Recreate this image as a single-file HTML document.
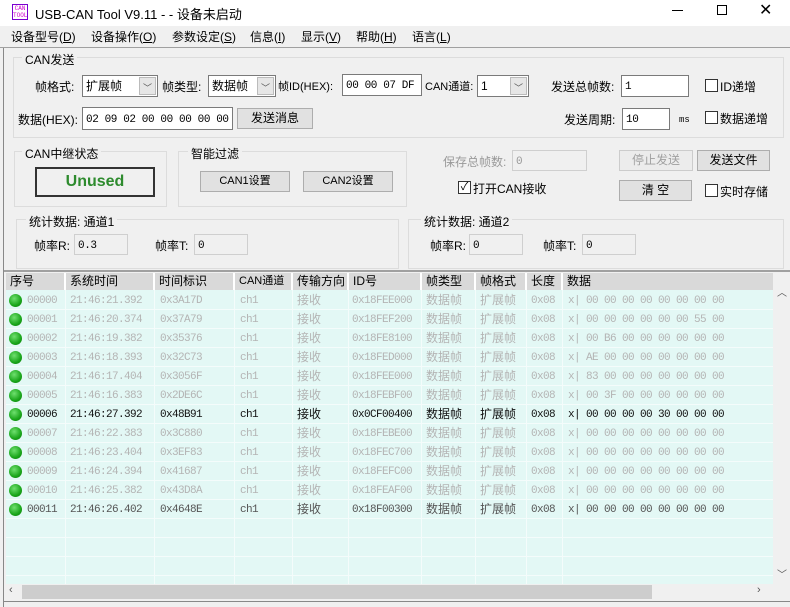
<!DOCTYPE html><html><head><meta charset="utf-8"><style>
*{margin:0;padding:0;box-sizing:border-box}
body{width:790px;height:607px;background:#f0f0f0;position:relative;overflow:hidden;font-family:"Liberation Sans","Noto Sans CJK SC",sans-serif;font-size:12px;color:#000}
.a{position:absolute;white-space:nowrap}
.g{position:absolute;border:1px solid #dcdcdc}
.gl{position:absolute;background:#f0f0f0;padding:0 3px;font-size:12px}
.in{position:absolute;background:#fff;border:1px solid #7a7a7a;font-family:"Liberation Mono","Noto Sans CJK SC",monospace;font-size:11px;padding:2px 0 0 3px;display:flex;align-items:center;white-space:nowrap;overflow:hidden;letter-spacing:-0.4px}
.dis{background:#f0f0f0;border-color:#cfcfcf;color:#999}
.btn{position:absolute;background:#e1e1e1;border:1px solid #adadad;text-align:center;font-size:12px}
.cb{position:absolute;width:13px;height:13px;border:1px solid #333;background:#fff}
.cmb{position:absolute;background:#fff;border:1px solid #7a7a7a;font-size:12px;padding-left:3px}
.cmb i{position:absolute;right:1px;top:1px;bottom:1px;width:17px;background:#e6e6e6;border:1px solid #bbb;font-style:normal;font-size:9px;text-align:center;color:#555}
.tb{position:absolute;left:6px;top:273px;width:767px;height:311px;background:#e3f8f5;overflow:hidden}
.row{position:absolute;left:0;height:19px;width:767px;border-bottom:1px solid #f4fcfb;font-family:"Liberation Mono","Noto Sans CJK SC",monospace;font-size:11px;letter-spacing:-0.6px;color:#b4b4b4;line-height:19px}
.row span{position:absolute;top:1px}
.row .c{font-family:"Noto Sans CJK SC",sans-serif;font-size:12px;letter-spacing:0;top:-1px}
.hd{position:absolute;top:0;height:17px;background:#d9d9d9;border-right:2px solid #fff;font-size:12px;line-height:17px;padding-left:4px}
.dot{position:absolute;left:3px;top:3px;width:13px;height:13px;border-radius:50%;background:radial-gradient(circle at 40% 35%,#6fe06f,#1aa51a 60%,#0b7a0b)}
.vl{position:absolute;top:17px;bottom:0;width:1px;background:#f4fcfb}
</style></head><body>
<div class="a" style="left:0;top:0;width:790px;height:26px;background:#fff"></div>
<div class="a" style="left:12px;top:4px;width:16px;height:16px;border:1px solid #7a00d0;background:#fff;font-size:6px;line-height:7px;color:#d000d0;text-align:center;font-family:'Liberation Mono'">CAN<br>TOOL</div>
<div class="a" style="left:35px;top:4px;font-size:13px">USB-CAN Tool V9.11 -  - 设备未启动</div>
<div class="a" style="left:672px;top:10px;width:11px;height:1px;background:#000"></div>
<div class="a" style="left:717px;top:5px;width:10px;height:10px;border:1px solid #000"></div>
<div class="a" style="left:759px;top:0px;font-size:16px">✕</div>
<div class="a" style="left:0;top:26px;width:790px;height:21px;background:#f0f0f0"></div>
<div class="a" style="left:11px;top:28px">设备型号(<u>D</u>)</div>
<div class="a" style="left:91px;top:28px">设备操作(<u>O</u>)</div>
<div class="a" style="left:172px;top:28px">参数设定(<u>S</u>)</div>
<div class="a" style="left:250px;top:28px">信息(<u>I</u>)</div>
<div class="a" style="left:301px;top:28px">显示(<u>V</u>)</div>
<div class="a" style="left:356px;top:28px">帮助(<u>H</u>)</div>
<div class="a" style="left:412px;top:28px">语言(<u>L</u>)</div>
<div class="a" style="left:0;top:47px;width:790px;height:1px;background:#a0a0a0"></div>
<div class="a" style="left:3px;top:48px;width:1px;height:559px;background:#888"></div>

<div class="g" style="left:13px;top:57px;width:771px;height:81px"></div>
<div class="gl" style="left:22px;top:51px">CAN发送</div>
<div class="a" style="left:35px;top:78px">帧格式:</div>
<div class="cmb" style="left:82px;top:75px;width:76px;height:22px;line-height:20px">扩展帧<i>﹀</i></div>
<div class="a" style="left:162px;top:78px">帧类型:</div>
<div class="cmb" style="left:208px;top:75px;width:68px;height:22px;line-height:20px">数据帧<i>﹀</i></div>
<div class="a" style="left:278px;top:78px;font-size:11px">帧ID(HEX):</div>
<div class="in" style="left:342px;top:74px;width:80px;height:22px">00 00 07 DF</div>
<div class="a" style="left:425px;top:78px;font-size:11px">CAN通道:</div>
<div class="cmb" style="left:477px;top:75px;width:52px;height:22px;line-height:20px">1<i>﹀</i></div>
<div class="a" style="left:551px;top:78px">发送总帧数:</div>
<div class="in" style="left:621px;top:75px;width:68px;height:22px">1</div>
<div class="cb" style="left:705px;top:79px"></div><div class="a" style="left:720px;top:78px">ID递增</div>
<div class="a" style="left:18px;top:111px">数据(HEX):</div>
<div class="in" style="left:82px;top:107px;width:151px;height:23px">02 09 02 00 00 00 00 00</div>
<div class="btn" style="left:237px;top:108px;width:76px;height:21px;line-height:19px">发送消息</div>
<div class="a" style="left:564px;top:111px">发送周期:</div>
<div class="in" style="left:622px;top:108px;width:48px;height:22px">10</div>
<div class="a" style="left:679px;top:115px;font-size:9px;font-family:'Liberation Mono'">ms</div>
<div class="cb" style="left:705px;top:111px"></div><div class="a" style="left:720px;top:110px">数据递增</div>

<div class="g" style="left:14px;top:151px;width:153px;height:56px"></div>
<div class="gl" style="left:22px;top:145px">CAN中继状态</div>
<div class="a" style="left:35px;top:167px;width:120px;height:30px;border:2px solid #333;color:#2e8b2e;font-weight:bold;font-size:16px;text-align:center;line-height:26px">Unused</div>
<div class="g" style="left:178px;top:151px;width:229px;height:56px"></div>
<div class="gl" style="left:188px;top:145px">智能过滤</div>
<div class="btn" style="left:200px;top:171px;width:90px;height:21px;line-height:19px;font-size:11px">CAN1设置</div>
<div class="btn" style="left:303px;top:171px;width:90px;height:21px;line-height:19px;font-size:11px">CAN2设置</div>
<div class="a" style="left:443px;top:153px;color:#999">保存总帧数:</div>
<div class="in dis" style="left:512px;top:150px;width:75px;height:21px">0</div>
<div class="btn" style="left:619px;top:150px;width:74px;height:21px;line-height:19px;color:#a0a0a0;background:#ececec;border-color:#ccc">停止发送</div>
<div class="btn" style="left:697px;top:150px;width:73px;height:21px;line-height:19px">发送文件</div>
<div class="cb" style="left:458px;top:181px;font-size:11px;line-height:10px;text-align:center">✓</div><div class="a" style="left:473px;top:180px">打开CAN接收</div>
<div class="btn" style="left:619px;top:180px;width:73px;height:21px;line-height:19px">清 空</div>
<div class="cb" style="left:705px;top:184px"></div><div class="a" style="left:720px;top:183px">实时存储</div>

<div class="g" style="left:16px;top:219px;width:383px;height:50px"></div>
<div class="gl" style="left:26px;top:213px">统计数据: 通道1</div>
<div class="a" style="left:34px;top:237px">帧率R:</div>
<div class="in dis" style="left:74px;top:234px;width:54px;height:21px;color:#000">0.3</div>
<div class="a" style="left:155px;top:237px">帧率T:</div>
<div class="in dis" style="left:194px;top:234px;width:54px;height:21px;color:#000">0</div>
<div class="g" style="left:408px;top:219px;width:376px;height:50px"></div>
<div class="gl" style="left:421px;top:213px">统计数据: 通道2</div>
<div class="a" style="left:430px;top:237px">帧率R:</div>
<div class="in dis" style="left:469px;top:234px;width:54px;height:21px;color:#000">0</div>
<div class="a" style="left:543px;top:237px">帧率T:</div>
<div class="in dis" style="left:582px;top:234px;width:54px;height:21px;color:#000">0</div>

<div class="a" style="left:4px;top:270px;width:786px;height:2px;background:#a0a0a0"></div>
<div class="tb">
<div class="hd" style="left:0;width:60px">序号</div>
<div class="hd" style="left:60px;width:89px">系统时间</div>
<div class="hd" style="left:149px;width:80px">时间标识</div>
<div class="hd" style="left:229px;width:58px;font-size:11px">CAN通道</div>
<div class="hd" style="left:287px;width:56px">传输方向</div>
<div class="hd" style="left:343px;width:73px">ID号</div>
<div class="hd" style="left:416px;width:54px">帧类型</div>
<div class="hd" style="left:470px;width:51px">帧格式</div>
<div class="hd" style="left:521px;width:36px">长度</div>
<div class="hd" style="left:557px;width:210px;border-right:0">数据</div>
<div class="vl" style="left:59px"></div><div class="vl" style="left:148px"></div><div class="vl" style="left:228px"></div><div class="vl" style="left:286px"></div><div class="vl" style="left:342px"></div><div class="vl" style="left:415px"></div><div class="vl" style="left:469px"></div><div class="vl" style="left:520px"></div><div class="vl" style="left:556px"></div>
<div id="rows"></div>
</div>
<div class="a" style="left:773px;top:273px;width:17px;height:311px;background:#f0f0f0"></div>
<div class="a" style="left:777px;top:284px;font-size:10px;color:#555">︿</div>
<div class="a" style="left:777px;top:566px;font-size:10px;color:#555">﹀</div>
<div class="a" style="left:6px;top:584px;width:767px;height:16px;background:#f0f0f0"></div>
<div class="a" style="left:22px;top:585px;width:630px;height:14px;background:#cdcdcd"></div>
<div class="a" style="left:9px;top:584px;font-size:11px;color:#555">‹</div>
<div class="a" style="left:757px;top:584px;font-size:11px;color:#555">›</div>
<div class="a" style="left:4px;top:601px;width:786px;height:1px;background:#888"></div>
<script>
var d=[["00000","21:46:21.392","0x3A17D","0x18FEE000","00 00 00 00 00 00 00 00",0],
["00001","21:46:20.374","0x37A79","0x18FEF200","00 00 00 00 00 00 55 00",0],
["00002","21:46:19.382","0x35376","0x18FE8100","00 B6 00 00 00 00 00 00",0],
["00003","21:46:18.393","0x32C73","0x18FED000","AE 00 00 00 00 00 00 00",0],
["00004","21:46:17.404","0x3056F","0x18FEE000","83 00 00 00 00 00 00 00",0],
["00005","21:46:16.383","0x2DE6C","0x18FEBF00","00 3F 00 00 00 00 00 00",0],
["00006","21:46:27.392","0x48B91","0x0CF00400","00 00 00 00 30 00 00 00",1],
["00007","21:46:22.383","0x3C880","0x18FEBE00","00 00 00 00 00 00 00 00",0],
["00008","21:46:23.404","0x3EF83","0x18FEC700","00 00 00 00 00 00 00 00",0],
["00009","21:46:24.394","0x41687","0x18FEFC00","00 00 00 00 00 00 00 00",0],
["00010","21:46:25.382","0x43D8A","0x18FEAF00","00 00 00 00 00 00 00 00",0],
["00011","21:46:26.402","0x4648E","0x18F00300","00 00 00 00 00 00 00 00",2]];
var h="";
for(var i=0;i<15;i++){var t=18+i*19;var r=d[i];
if(r){var c=r[5]==1?"#111":(r[5]==2?"#555":"#b4b4b4");
h+='<div class="row" style="top:'+t+'px;color:'+c+'"><div class="dot"></div><span style="left:21px">'+r[0]+'</span><span style="left:64px">'+r[1]+'</span><span style="left:154px">'+r[2]+'</span><span style="left:234px">ch1</span><span class="c" style="left:291px">接收</span><span style="left:346px">'+r[3]+'</span><span class="c" style="left:420px">数据帧</span><span class="c" style="left:474px">扩展帧</span><span style="left:525px">0x08</span><span style="left:562px">x| '+r[4]+'</span></div>';}
else h+='<div class="row" style="top:'+t+'px"></div>';}
document.getElementById("rows").innerHTML=h;
</script>
</body></html>
